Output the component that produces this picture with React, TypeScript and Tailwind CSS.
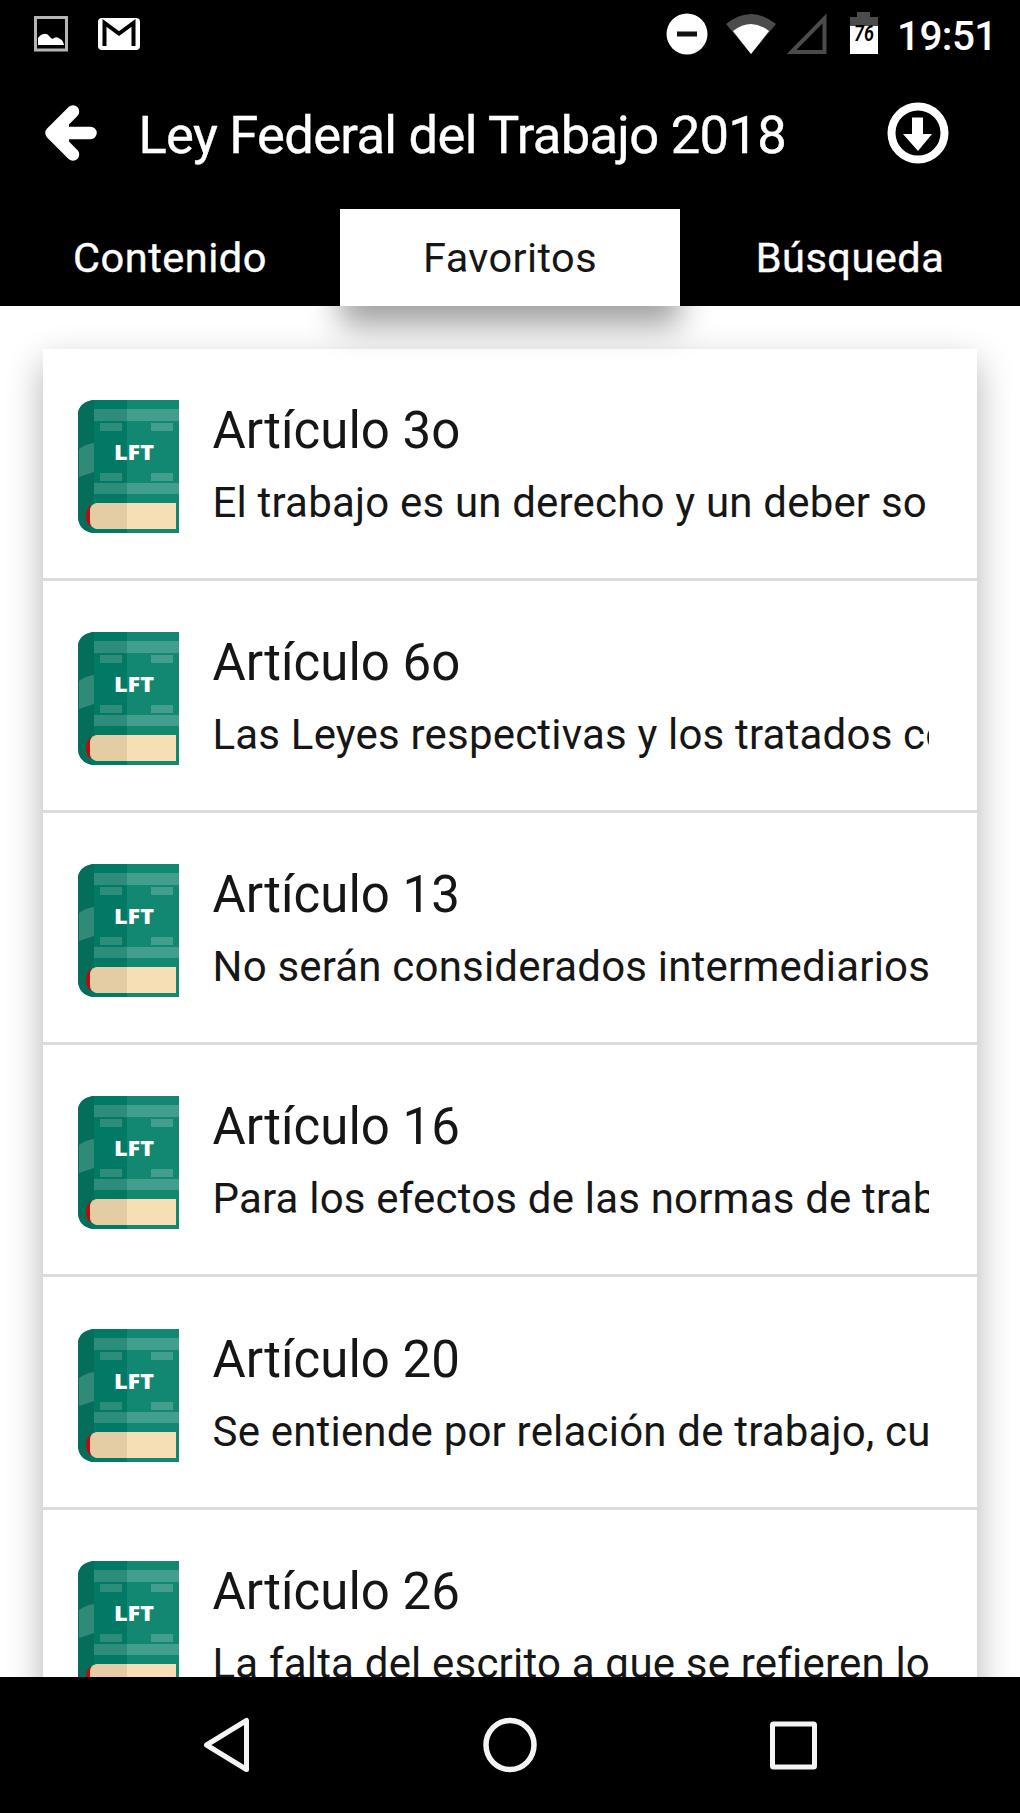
const articles = [
  { title: 'Artículo 3o', text: 'El trabajo es un derecho y un deber so' },
  { title: 'Artículo 6o', text: 'Las Leyes respectivas y los tratados co' },
  { title: 'Artículo 13', text: 'No serán considerados intermediarios' },
  { title: 'Artículo 16', text: 'Para los efectos de las normas de trab' },
  { title: 'Artículo 20', text: 'Se entiende por relación de trabajo, cu' },
  { title: 'Artículo 26', text: 'La falta del escrito a que se refieren lo' },
];

function Book() {
  return (
    <svg className="mb-[45px] h-[133px] w-[101px] shrink-0 self-end" viewBox="0 0 101 133">
      <path d="M14 0H101V133H14Q0 130 0 116V15Q0 3 14 0Z" fill="#007a64" />
      <path d="M16 0V103Q8 107 8 117Q8 126 15 133Q0 130 0 116V15Q0 3 16 0Z" fill="#046e5b" />
      <path d="M49 0H101V133H49Z" fill="#128873" />
      <path d="M16 9H49V21H16ZM22 23H44V31H22ZM22 73H44V81H22ZM16 83H49V94H16Z" fill="#2e8c7b" />
      <path d="M49 9H101V21H49ZM73 23H95V31H73ZM73 73H95V81H73ZM49 83H101V94H49Z" fill="#429f8e" />
      <path d="M1 49Q8 44 16 43V72L1 77Z" fill="#318977" />
      <path d="M13 105Q8 108 8 116Q8 124 13 127Z" fill="#b90c0c" />
      <path d="M18 103H49V129H18Q12 127 12 122V110Q12 105 18 103Z" fill="#e4cda4" />
      <path d="M49 103H98V129H49Z" fill="#f6deb5" />
      <text x="56" y="60" textAnchor="middle" fill="#fff" fontFamily="'Open Sans', sans-serif" fontSize="21.500" fontWeight="800" textLength="40" lengthAdjust="spacingAndGlyphs">LFT</text>
    </svg>
  );
}

function StatusBar() {
  return (
    <div className="flex h-[70px] items-start text-white">
      <svg className="mt-4 ml-[34px] h-[36px] w-[34px]" viewBox="0 0 34 36">
        <rect x="1.500" y="1.500" width="31" height="32.500" fill="none" stroke="#b5b5b5" strokeWidth="3" />
        <path d="M4 29V22Q7 18 10 18Q13 17 16 21Q18 24 20 22Q23 20 26 23Q29 24 30 29Z" fill="#fff" />
      </svg>
      <svg className="mt-[18px] ml-[30px] h-[32px] w-[42px]" viewBox="0 0 42 32">
        <rect width="42" height="32" rx="4" fill="#fff" />
        <path d="M6.500 28V5L21 15.500L35.500 5V28" fill="none" stroke="#000" strokeWidth="4" />
      </svg>
      <svg className="mt-[13px] ml-[526px] h-[42px] w-[42px]" viewBox="0 0 42 42">
        <circle cx="21" cy="21" r="20.500" fill="#fff" />
        <path d="M11 21H31" stroke="#111" strokeWidth="5" />
      </svg>
      <svg className="mt-[13px] ml-[17px] h-[42px] w-[52px]" viewBox="0 0 52 42">
        <path d="M1 11Q26 -9 51 11L26 41Z" fill="#4b4b4b" />
        <path d="M8 18Q26 4 44 18L26 41Z" fill="#fff" />
      </svg>
      <svg className="mt-[13px] ml-[9px] h-[42px] w-[42px]" viewBox="0 0 42 42">
        <path d="M5.500 39H38.500V5.500Z" fill="none" stroke="#4b4b4b" strokeWidth="4" />
      </svg>
      <svg className="mt-[12px] ml-[22px] h-[42px] w-[28px]" viewBox="0 0 28 42">
        <path d="M0 5H7V0H20V5H28V14H0Z" fill="#4b4b4b" />
        <path d="M0 14H28V42H0Z" fill="#fff" />
        <text x="14" y="29" textAnchor="middle" fontFamily="Roboto, sans-serif" fontSize="22" fontWeight="600" fontStyle="italic" textLength="20" lengthAdjust="spacingAndGlyphs">76</text>
      </svg>
      <span className="mt-[13px] ml-[19px] text-[40.500px] leading-[47px] font-medium tracking-[-0.600px]">19:51</span>
    </div>
  );
}

export default function App() {
  return (
    <div className="flex h-[1813px] w-[1020px] flex-col overflow-hidden bg-white font-['Roboto',sans-serif] text-[#161616]">
      <header className="relative h-[306px] shrink-0 bg-black text-white">
        <StatusBar />
        <div className="flex h-[139px] items-start">
          <svg className="mt-[35px] ml-[45px] h-[56px] w-[52px]" viewBox="0 0 52 56">
            <path d="M28 6.500L6.500 28L28 49.500M12 28H45.500" fill="none" stroke="#fff" strokeWidth="12.500" strokeLinecap="round" strokeLinejoin="round" />
            <path d="M6 26L24 10V46L6 30Z" fill="#fff" />
          </svg>
          <h1 className="mt-[34px] ml-[41.500px] w-[748px] text-[52.500px] leading-[62px] font-normal tracking-[-0.700px] whitespace-nowrap [-webkit-text-stroke:0.400px_white]">Ley Federal del Trabajo 2018</h1>
          <svg className="mt-[32px] h-[62px] w-[62px]" viewBox="0 0 62 62">
            <circle cx="31" cy="31" r="26.500" fill="none" stroke="#fff" strokeWidth="8" />
            <path d="M25 15.500H36V32H45L31 49L16 32H25Z" fill="#fff" />
          </svg>
        </div>
        <nav className="grid h-[97px] grid-cols-3 text-center text-[41.500px] leading-[98px]">
          <div className="tracking-[0.500px] [-webkit-text-stroke:0.400px_white]">Contenido</div>
          <div className="h-[97px] bg-white tracking-[0.400px] text-[#161616] shadow-[0_20px_30px_rgba(0,0,0,0.370)]">Favoritos</div>
          <div className="tracking-[0.500px] [-webkit-text-stroke:0.400px_white]">Búsqueda</div>
        </nav>
      </header>
      <main className="min-h-0 flex-1 overflow-hidden px-[43px] pt-[43px]">
        <div className="bg-white shadow-[0_14px_34px_rgba(0,0,0,0.300)]">
          {articles.map((a) => (
            <article key={a.title} className="flex h-[232.300px] border-b-[3px] border-[#dcdcdc] pl-[34.500px] first:h-[231.500px]">
              <Book />
              <div className="mb-[46px] ml-[34px] w-[716px] self-end overflow-hidden whitespace-nowrap">
                <h2 className="text-[51px] leading-[66px] font-normal">{a.title}</h2>
                <p className="mt-[10px] text-[42px] leading-[58px] tracking-[0.190px]">{a.text}</p>
              </div>
            </article>
          ))}
        </div>
      </main>
      <footer className="relative h-[136px] shrink-0 bg-black">
        <div className="flex items-start pt-[40px] pl-[203px]">
          <svg className="h-[56px] w-[48px]" viewBox="0 0 48 56">
            <path d="M3.500 28L43.500 3.500V52.500Z" fill="none" stroke="#f4f4f4" strokeWidth="5" strokeLinejoin="round" />
          </svg>
          <svg className="ml-[232px] h-[56px] w-[54px]" viewBox="0 0 54 56">
            <ellipse cx="27" cy="28" rx="24" ry="24.500" fill="none" stroke="#f4f4f4" strokeWidth="5.500" />
          </svg>
          <svg className="ml-[232px] h-[56px] w-[48px]" viewBox="0 0 48 56">
            <rect x="3.500" y="7" width="42" height="43" rx="1" fill="none" stroke="#f4f4f4" strokeWidth="5" />
          </svg>
        </div>
      </footer>
    </div>
  );
}
